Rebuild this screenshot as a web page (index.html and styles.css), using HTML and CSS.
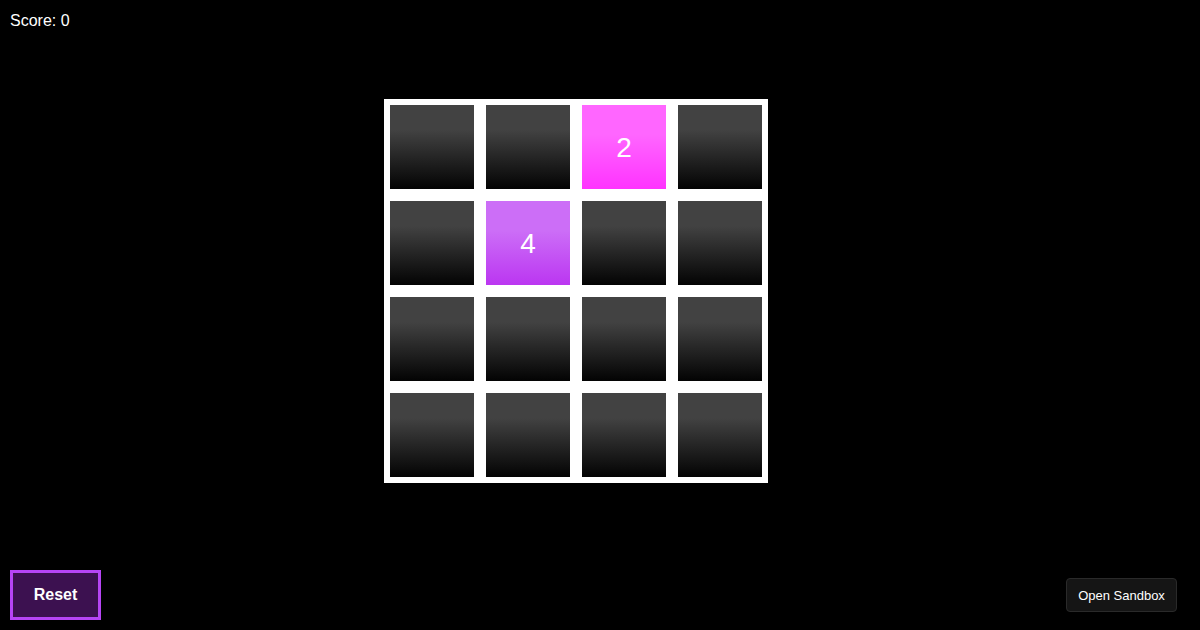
FILE: index.html
```html
<!DOCTYPE html>
<html>
<head>
<meta charset="utf-8">
<link rel="stylesheet" href="styles.css">
</head>
<body>
<div class="score">Score: 0</div>
<div class="board-wrap">
  <div class="board">
    <div class="tile"></div>
    <div class="tile"></div>
    <div class="tile t2">2</div>
    <div class="tile"></div>
    <div class="tile"></div>
    <div class="tile t4">4</div>
    <div class="tile"></div>
    <div class="tile"></div>
    <div class="tile"></div>
    <div class="tile"></div>
    <div class="tile"></div>
    <div class="tile"></div>
    <div class="tile"></div>
    <div class="tile"></div>
    <div class="tile"></div>
    <div class="tile"></div>
  </div>
</div>
<button class="reset">Reset</button>
<button class="sandbox">Open Sandbox</button>
</body>
</html>
```

FILE: styles.css
```css
html, body {
  margin: 0;
  padding: 0;
  background: #000;
  width: 1200px;
  height: 630px;
  overflow: hidden;
  font-family: "Liberation Sans", Arial, sans-serif;
  color: #fff;
  position: relative;
}
.score {
  padding: 12px 0 0 10px;
  font-size: 16px;
  line-height: 18px;
}
.board-wrap {
  padding: 69px 0 0 384px;
}
.board {
  width: 384px;
  height: 384px;
  box-sizing: border-box;
  background: #fff;
  display: grid;
  grid-template-columns: repeat(4, 84px);
  grid-template-rows: repeat(4, 84px);
  gap: 12px;
  padding: 6px;
}
.tile {
  background: linear-gradient(to bottom, #424242 30%, #030303 100%);
  display: flex;
  align-items: center;
  justify-content: center;
  font-size: 28px;
  color: #fff;
  padding-top: 2px;
}
.t2 {
  background: linear-gradient(to bottom, #ff66ff 35%, #ff33ff 100%);
}
.t4 {
  background: linear-gradient(to bottom, #cc6ef7 35%, #bb36f1 100%);
}
.reset {
  position: absolute;
  left: 10px;
  top: 570px;
  width: 91px;
  height: 50px;
  box-sizing: border-box;
  border: 3px solid #b645f5;
  background: #3c1150;
  color: #fff;
  font-family: "Liberation Sans", Arial, sans-serif;
  font-weight: bold;
  font-size: 16px;
  padding: 0;
}
.sandbox {
  position: absolute;
  left: 1066px;
  top: 578px;
  width: 111px;
  height: 34px;
  box-sizing: border-box;
  border: 1px solid #2a2a2a;
  border-radius: 4px;
  background: #151515;
  color: #fff;
  font-family: "Liberation Sans", Arial, sans-serif;
  font-size: 13px;
  padding: 0;
}
```
